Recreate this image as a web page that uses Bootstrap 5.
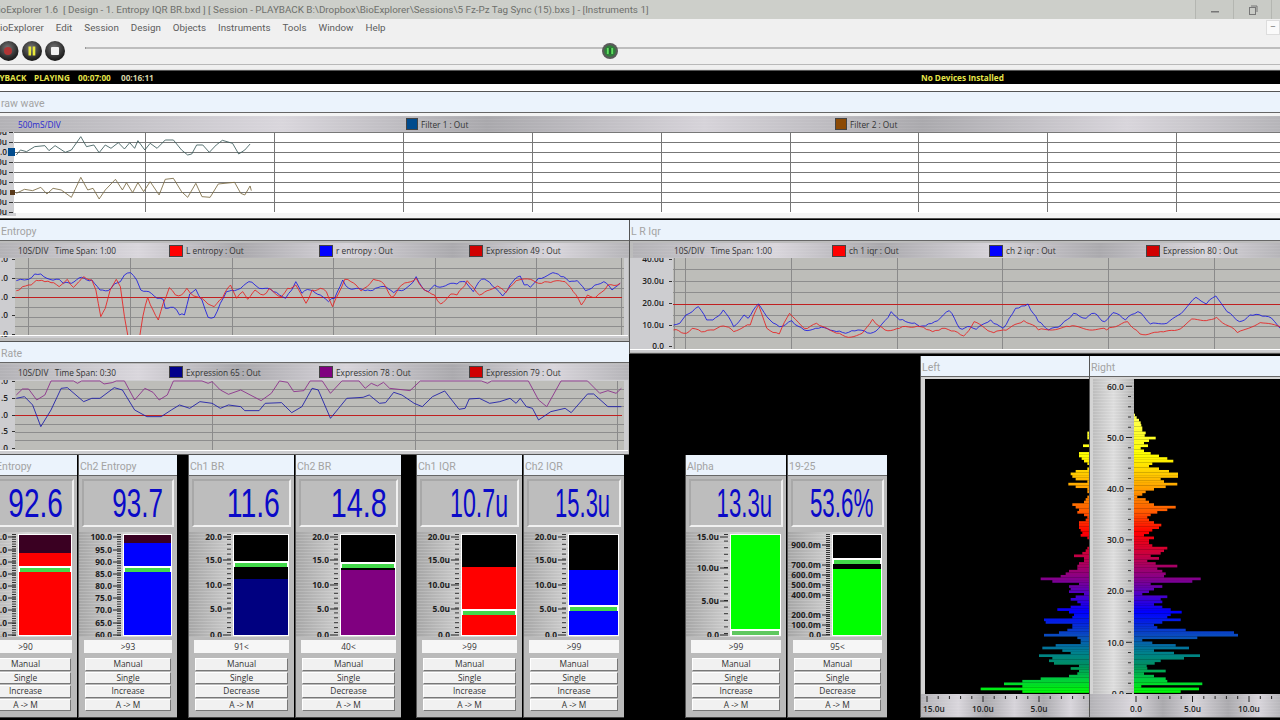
<!DOCTYPE html>
<html lang="en">
<head>
<meta charset="utf-8">
<title>BioExplorer 1.6</title>
<link href="https://cdn.jsdelivr.net/npm/bootstrap@5.3.0/dist/css/bootstrap.min.css" rel="stylesheet">
<style>
  :root {
    --ui-font: "Open Sans", "Noto Sans", "Liberation Sans", sans-serif;
    --win-font: Roboto, "Liberation Sans", sans-serif;
    --head-metal: repeating-linear-gradient(0deg, rgba(255,255,255,.07) 0 1px, transparent 1px 3px), linear-gradient(90deg, #b3b2b6, #d9d6dc 22%, #a9a8ac 38%, #d6d3d9 55%, #aaa9ad 72%, #d8d5db 88%, #b5b4b8);
    --side-metal: repeating-linear-gradient(0deg, rgba(255,255,255,.16) 0 1px, transparent 1px 3px), linear-gradient(90deg, #a6a6a6, #d6d6d6 55%, #bdbdbd);
  }
  html, body { height: 100%; }
  body { width: 1280px; height: 720px; overflow: hidden; background: #000; font-family: var(--ui-font); }

  .app-title { height: 19px; background: #cdcfca; color: #6d6f6c; font-family: var(--win-font); font-size: 9.85px; line-height: 19px; white-space: nowrap; flex: none; }
  .app-title .ttl { margin-left: -8px; }
  .win-box { margin-right: -29px; }
  .win-ctl { width: 38px; height: 19px; border-left: 1px solid #b4b6b1; color: #666; background: #c9cbc6; }
  .app-menu { height: 18px; background: #f0f0f0; padding: 0; font-family: var(--win-font); font-size: 9.8px; flex: none; }
  .app-menu .navbar-nav .nav-link { padding: 0 6px; line-height: 18px; color: #5c5c5c; }
  .app-menu .navbar-nav .nav-link.first { margin-left: -12px; }
  .mini-ctl { width: 14px; height: 15px; margin-top: -1px; background: #fafafa; border: 1px solid #ddd; color: #777; font-size: 9px; line-height: 12px; text-align: center; }
  .app-tools { height: 33px; background: #f0f0f0; flex: none; }
  .round-btns { width: 85px; flex: none; }
  .slider-line { height: 2px; margin-top: -5px; background: #bdbdbd; border-left: 1px solid #999; }
  .tool-foot { height: 6px; border-top: 1px solid #b9b9b9; border-bottom: 1px solid #ddd; }
  .thumb { position: absolute; left: 602px; top: 6px; }
  .app-status { height: 14px; border-top: 1px solid #555; background: #000; color: #e6e64a; font-size: 8.2px; font-weight: 700; line-height: 14px; white-space: nowrap; flex: none; }
  .app-status .st-a { margin-left: -16px; width: 50px; flex: none; }
  .app-status .st-b { width: 44px; flex: none; }
  .app-status .st-c { width: 43px; flex: none; }
  .app-status .st-d { width: 800px; color: #d6d6a8; flex: none; }
  .app-gap { height: 8px; background: #fff; border-bottom: 1px solid #555; flex: none; }

  .mdi { position: relative; height: 628px; background: #000; flex: none; }
  .iw { position: absolute; background: #bcbcbc; border-left: 1px solid #555; border-bottom: 1px solid #555; overflow: hidden; }
  .iw-title { height: 21px; background: #ebf3fc; border-bottom: 1px solid #666; color: #a3a3a3; font-family: var(--win-font); font-size: 10.5px; line-height: 23px; padding-left: 1px; white-space: nowrap; flex: none; }
  .w-raw { left: -1px; top: 0; width: 1282px; height: 127px; background: #f4f4f4; }
  .w-ent { left: -1px; top: 128px; width: 630px; height: 122px; }
  .w-iqr { left: 629px; top: 128px; width: 652px; height: 134px; }
  .w-rate { left: -1px; top: 250px; width: 630px; height: 113px; }
  .w-hl { left: 920px; top: 264px; width: 170px; height: 362px; }
  .w-hr { left: 1089px; top: 264px; width: 192px; height: 362px; }

  .cw-head { height: 15px; margin-top: 2px; background: var(--head-metal); color: #333; font-size: 8.3px; line-height: 15px; white-space: nowrap; flex: none; }
  .cw-head .t0 { flex: none; }
  .cw-head .sw { width: 14px; height: 12px; margin-right: 3px; border: 1px solid #444; flex: none; }
  .cw-head .lg { display: flex; align-items: center; flex: none; }
  .hd-raw { height: 16px; margin-top: 3px; padding-left: 18px; } .hd-raw .t0 { width: 388px; color: #2a2ad0; } .hd-raw .lg { width: 429px; }
  .hd-raw .sw { width: 12px; }
  .hd-ent { padding-left: 18px; } .hd-ent .t0 { width: 151px; } .hd-ent .lg { width: 150px; }
  .hd-rate { height: 16px; margin-top: 1px; }
  .hd-iqr { padding-left: 41px; margin-left: 3px; } .hd-iqr .t0 { width: 158px; } .hd-iqr .lg { width: 157px; }
  .cw-body { display: block; flex: none; }
  .cw-body text, .h-axis text { font-family: var(--ui-font); font-size: 8.3px; font-weight: 600; fill: #222; }
  .tr { fill: none; stroke-width: 1; vector-effect: non-scaling-stroke; stroke-linejoin: round; stroke-opacity: .85; }

  .g-win { top: 363px; height: 263px; border-bottom-color: #444; background: #bababa; }
  .g-value { height: 48px; margin: 3px 3px 0 3px; padding-right: 9px; background: #bdbdbd; border: 2px solid #f0f0f0; border-top-color: #a8a8a8; border-left-color: #a8a8a8; color: #0a0ac8; font-family: "Liberation Sans", sans-serif; font-size: 40px; line-height: 44px; }
  .g-value span { flex: none; transform-origin: right center; }
  .g-mid { margin: 5px 5px 0 0; height: 105px; background: var(--side-metal); }
  .g-mid svg { flex: none; display: block; }
  .g-mid svg text { font-family: var(--ui-font); font-size: 8.4px; font-weight: 700; fill: #1d1d1d; }
  .g-bar { position: relative; height: 102px; margin-top: 2px; background: #000; border: 1px solid #fff; overflow: hidden; }
  .g-cap { position: absolute; left: 0; right: 0; height: 6px; border: 1px solid #fff; border-width: 2px 1px 0 1px; background: #42d94a; }
  .g-range { height: 13px; margin: 3px 5px 5px 5px; background: #f6f6f6; color: #333; font-size: 8.4px; line-height: 13px; text-align: center; }
  .g-btn.btn { display: block; width: calc(100% - 12px); height: 12.5px; margin: 0 6px 1px 6px; padding: 0; border: 1px solid; border-color: #fff #777 #777 #fff; border-radius: 0; background: #f1f1f1; color: #333; font-size: 8.4px; line-height: 10px; }

  .h-black { background: #000; flex: none; display: block; }
  .h-axis { display: block; flex: none; background: var(--head-metal); }
  .h-left { padding: 2px 0 0 4px; background: #d4d4d4; flex: none; }
  .h-right { padding-top: 2px; flex: none; background: #d4d4d4; }
  .h-side { width: 41px; margin-left: 3px; flex: none; background: repeating-linear-gradient(0deg, rgba(255,255,255,.16) 0 1px, transparent 1px 3px), linear-gradient(90deg, #bdbdbd, #dcdcdc 50%, #b5b5b5); }
</style>
</head>
<body class="d-flex flex-column">

<div class="app-title d-flex justify-content-between">
  <div class="ttl">BioExplorer 1.6 &nbsp;[ Design - 1. Entropy IQR BR.bxd ] [ Session - PLAYBACK B:\Dropbox\BioExplorer\Sessions\5 Fz-Pz Tag Sync (15).bxs ] - [Instruments 1]</div>
  <div class="d-flex win-box">
    <div class="win-ctl d-flex align-items-center justify-content-center"><svg width="10" height="10"><rect x="1" y="6" width="8" height="1.5" fill="#777"/></svg></div>
    <div class="win-ctl d-flex align-items-center justify-content-center"><svg width="10" height="10"><rect x="1.5" y="2.5" width="6" height="7" fill="none" stroke="#777"/><path d="M3 1h6v6" fill="none" stroke="#777"/></svg></div>
    <div class="win-ctl"></div>
  </div>
</div>

<nav class="navbar navbar-expand app-menu">
  <ul class="navbar-nav flex-row flex-grow-1">
    <li class="nav-item"><a class="nav-link first" href="#">BioExplorer</a></li>
    <li class="nav-item"><a class="nav-link" href="#">Edit</a></li>
    <li class="nav-item"><a class="nav-link" href="#">Session</a></li>
    <li class="nav-item"><a class="nav-link" href="#">Design</a></li>
    <li class="nav-item"><a class="nav-link" href="#">Objects</a></li>
    <li class="nav-item"><a class="nav-link" href="#">Instruments</a></li>
    <li class="nav-item"><a class="nav-link" href="#">Tools</a></li>
    <li class="nav-item"><a class="nav-link" href="#">Window</a></li>
    <li class="nav-item"><a class="nav-link" href="#">Help</a></li>
  </ul>
  <div class="mini-ctl">–</div>
</nav>

<div class="app-tools d-flex flex-column position-relative">
  <div class="d-flex align-items-center flex-grow-1">
    <div class="round-btns">
      <svg width="85" height="26" viewBox="0 0 85 26">
        <defs>
          <radialGradient id="rb" cx=".45" cy=".35" r=".7"><stop offset="0" stop-color="#777"/><stop offset=".7" stop-color="#2c2c2c"/><stop offset="1" stop-color="#111"/></radialGradient>
        </defs>
        <circle cx="8.5" cy="13" r="10" fill="url(#rb)"/><circle cx="8" cy="13" r="4" fill="#b03535"/>
        <circle cx="32" cy="13" r="10" fill="url(#rb)"/><rect x="28.5" y="8.5" width="2.6" height="9" fill="#e8e83a"/><rect x="32.7" y="8.5" width="2.6" height="9" fill="#e8e83a"/>
        <circle cx="55" cy="13" r="10" fill="url(#rb)"/><rect x="51" y="9" width="8" height="8" rx="1" fill="#f2f2f2"/>
      </svg>
    </div>
    <div class="slider-line flex-grow-1"></div>
  </div>
  <div class="tool-foot"></div>
  <svg class="thumb" width="16" height="16" viewBox="0 0 16 16">
    <circle cx="8" cy="8" r="8" fill="#5a5a5a"/><circle cx="8" cy="8" r="5.8" fill="#2f7d3a"/>
    <path d="M5.8 5v6M10.2 5v6" stroke="#5fe05f" stroke-width="1.8"/><path d="M8 5v6" stroke="#1d4d25"/>
  </svg>
</div>

<div class="app-status d-flex">
  <div class="st-a">PLAYBACK</div><div class="st-b">PLAYING</div><div class="st-c">00:07:00</div><div class="st-d">00:16:11</div><div>No Devices Installed</div>
</div>
<div class="app-gap"></div>

<div class="mdi">
  <!-- raw wave -->
  <section class="iw w-raw d-flex flex-column">
    <div class="iw-title">raw wave</div>
    <div class="cw-head hd-raw d-flex align-items-center">
      <div class="t0">500mS/DIV</div>
      <div class="lg"><span class="sw" style="background:#004b8d"></span>Filter 1 : Out</div>
      <div class="lg"><span class="sw" style="background:#8b4a06"></span>Filter 2 : Out</div>
    </div>
    <svg class="cw-body" width="1280" height="84" viewBox="0 132 1280 84">
      <rect x="0" y="132" width="16" height="84" fill="#cfcfd2"/>
      <rect x="14" y="132" width="1266" height="81" fill="#fff"/>
      <path d="M14 142.5H1280M14 152.5H1280M14 162.5H1280M14 172.5H1280M14 182.5H1280M14 192.5H1280M14 202.5H1280M14 132.5H1280" stroke="#777" fill="none"/>
      <path d="M145.5 133V212M274.5 133V212M403.5 133V212M532.5 133V212M661.5 133V212M790.5 133V212M918.5 133V212M1047.5 133V212M1176.5 133V212" stroke="#777" fill="none"/>
      <path d="M9 132.5h4M9 142.5h4M9 162.5h4M9 172.5h4M9 182.5h4M9 202.5h4M9 212.5h4" stroke="#333" fill="none"/>
      <text x="7" y="135" text-anchor="end">0u</text><text x="7" y="145" text-anchor="end">0u</text><text x="7" y="155" text-anchor="end">.0</text><text x="7" y="165" text-anchor="end">0u</text><text x="7" y="175" text-anchor="end">0u</text><text x="7" y="185" text-anchor="end">0u</text><text x="7" y="195" text-anchor="end">0u</text><text x="7" y="205" text-anchor="end">0u</text><text x="7" y="215" text-anchor="end">0u</text>
      <rect x="8" y="148" width="7" height="8" fill="#004b8d"/>
      <rect x="10" y="190" width="5" height="5" fill="#5a3a1a"/>
      <g transform="scale(.408 .3333)">
        <polyline class="tr" stroke="#3b5a5a" points="40,465 50,450 65,455 85,440 110,437 120,452 135,437 160,457 175,450 198,410 212,440 230,435 243,458 258,435 272,445 290,428 305,447 318,428 330,445 338,422 355,450 368,430 385,445 405,420 425,420 445,450 460,465 470,462 482,435 497,435 513,457 530,435 545,421 570,430 585,462 600,450 613,432"/>
        <polyline class="tr" stroke="#7a6a42" points="40,580 60,568 80,572 100,562 115,582 130,565 150,570 175,592 198,532 215,570 228,565 243,597 258,570 283,538 300,570 310,548 325,578 338,548 352,575 368,545 390,585 405,538 425,535 445,575 460,592 480,550 495,590 515,592 535,552 575,547 590,580 600,585 613,558 616,572"/>
      </g>
    </svg>
  </section>

  <!-- entropy -->
  <section class="iw w-ent d-flex flex-column">
    <div class="iw-title">Entropy</div>
    <div class="cw-head hd-ent d-flex align-items-center">
      <div class="t0">10S/DIV &nbsp; Time Span: 1:00</div>
      <div class="lg"><span class="sw" style="background:#ff0000"></span>L entropy : Out</div>
      <div class="lg"><span class="sw" style="background:#0000ff"></span>r entropy : Out</div>
      <div class="lg"><span class="sw" style="background:#d00000"></span>Expression 49 : Out</div>
    </div>
    <svg class="cw-body" width="628" height="80" viewBox="0 258 628 80">
      <rect x="0" y="258" width="628" height="80" fill="#cdcdd0"/>
      <rect x="15" y="258" width="609" height="77" fill="#bdbdb9"/>
      <path d="M15 268.5H624M15 278.5H624M15 288.5H624M15 307.5H624M15 317.5H624M15 326.5H624" stroke="#8d8d8d" fill="none"/>
      <path d="M28.5 258V335M130.5 258V335M232.5 258V335M333.5 258V335M435.5 258V335M536.5 258V335M621.5 258V335" stroke="#8a8a8a" fill="none"/>
      <path d="M15 297.5H622" stroke="#c02020" fill="none"/>
      <path d="M12 259.5h3M12 278.5h3M12 297.5h3M12 315.5h3M12 334.5h3" stroke="#333" fill="none"/>
      <text x="8" y="262" text-anchor="end">.0</text><text x="8" y="281" text-anchor="end">.0</text><text x="8" y="300" text-anchor="end">.0</text><text x="8" y="318" text-anchor="end">.0</text><text x="8" y="337" text-anchor="end">.0</text>
      <path d="M0 335.5H628" stroke="#fff" fill="none"/>
      <g transform="translate(0 220) scale(.408 .3333)">
        <polyline class="tr wig" stroke="#1a1ae0" points="40,182 50,178 60,180 70,178 85,162 100,162 115,175 145,178 155,190 175,190 200,172 225,180 245,210 265,212 280,192 295,185 305,165 320,158 335,180 345,210 365,215 385,235 400,238 405,265 425,262 440,285 452,285 465,222 480,208 495,240 510,292 525,292 540,250 555,215 575,212 590,205 610,185 625,195 635,205 650,205 670,215 685,225 700,235 715,210 725,185 740,220 760,210 785,225 805,245 820,235 840,180 855,205 880,205 895,212 920,205 945,200 965,218 990,210 1005,195 1020,170 1040,210 1050,215 1065,195 1085,200 1105,190 1120,192 1140,185 1160,215 1180,178 1200,187 1215,205 1232,228 1250,195 1275,168 1285,195 1300,202 1320,175 1355,158 1375,170 1395,185 1415,182 1435,212 1450,205 1480,185 1500,210 1520,190"/>
        <polyline class="tr wig" stroke="#e82020" points="40,212 55,200 70,195 95,182 125,188 145,200 165,178 180,202 205,170 225,180 235,210 247,290 258,265 270,210 285,178 295,200 305,290 313,345"/>
        <polyline class="tr wig" stroke="#e82020" points="343,345 350,290 362,232 375,270 388,300 400,250 415,203 430,225 445,225 458,205 475,228 495,235 525,260 545,235 565,195 580,235 595,215 607,238 625,210 645,225 660,205 690,230 705,205 725,195 750,250 765,210 785,205 800,215 815,260 830,220 845,178 860,185 885,213 915,178 935,185 960,232 985,195 1020,175 1040,210 1065,225 1080,252 1105,222 1120,225 1145,182 1175,225 1200,210 1220,198 1240,218 1265,182 1300,178 1320,190 1365,182 1385,185 1405,215 1425,255 1440,225 1460,232 1490,195 1520,190"/>
      </g>
    </svg>
  </section>

  <!-- rate -->
  <section class="iw w-rate d-flex flex-column">
    <div class="iw-title">Rate</div>
    <div class="cw-head hd-ent hd-rate d-flex align-items-center">
      <div class="t0">10S/DIV &nbsp; Time Span: 0:30</div>
      <div class="lg"><span class="sw" style="background:#00008b"></span>Expression 65 : Out</div>
      <div class="lg"><span class="sw" style="background:#800080"></span>Expression 78 : Out</div>
      <div class="lg"><span class="sw" style="background:#d00000"></span>Expression 79 : Out</div>
    </div>
    <svg class="cw-body" width="628" height="74" viewBox="0 380 628 74">
      <rect x="0" y="380" width="628" height="74" fill="#cdcdd0"/>
      <rect x="15" y="381" width="609" height="69" fill="#bdbdb9"/>
      <path d="M15 389.5H624M15 398.5H624M15 406.5H624M15 424.5H624M15 432.5H624M15 440.5H624" stroke="#8d8d8d" fill="none"/>
      <path d="M212.5 381V450M415.5 381V450M617.5 381V450" stroke="#8a8a8a" fill="none"/>
      <path d="M15 415.5H622" stroke="#c02020" fill="none"/>
      <path d="M12 381.5h3M12 398.5h3M12 415.5h3M12 431.5h3M12 448.5h3" stroke="#333" fill="none"/>
      <text x="8" y="384" text-anchor="end">.0</text><text x="8" y="401" text-anchor="end">.5</text><text x="8" y="418" text-anchor="end">.0</text><text x="8" y="434" text-anchor="end">.5</text><text x="8" y="451" text-anchor="end">.0</text>
      <path d="M0 450.5H628" stroke="#fff" fill="none"/>
      <g transform="translate(0 220) scale(.408 .3333)">
        <polyline class="tr" stroke="#8a2a8a" points="40,525 55,507 70,507 90,540 110,525 125,483 180,483 190,490 200,483 245,483 255,492 275,488 285,483 305,483 330,540 355,505 375,517 390,540 410,525 425,483 495,483 510,490 520,485 540,510 560,523 590,510 640,542 665,520 685,483 705,487 720,515 745,512 760,483 790,483 810,520 838,483 880,483 895,505 910,490 925,498 940,487 955,505 1005,512 1030,483 1180,483 1195,490 1205,483 1295,483 1320,540 1340,560 1375,483 1440,483 1470,520 1490,512 1510,520 1523,505"/>
        <polyline class="tr" stroke="#1a1aa8" points="40,535 60,530 80,555 100,620 125,570 150,505 165,503 205,545 225,535 245,535 280,503 300,510 330,570 360,590 395,590 420,570 440,555 465,565 490,545 520,550 540,565 560,555 590,560 600,572 635,572 650,550 690,548 715,578 740,560 765,505 780,510 810,595 830,565 850,535 890,532 905,525 930,550 945,548 965,517 985,525 1015,550 1035,560 1060,530 1090,513 1125,568 1140,565 1150,537 1175,535 1200,550 1225,545 1250,535 1265,550 1275,535 1290,560 1305,565 1320,600 1350,575 1385,565 1400,578 1440,522 1455,522 1490,560 1523,560"/>
      </g>
    </svg>
  </section>

  <!-- L R iqr -->
  <section class="iw w-iqr d-flex flex-column">
    <div class="iw-title">L R Iqr</div>
    <div class="cw-head hd-iqr d-flex align-items-center">
      <div class="t0">10S/DIV &nbsp; Time Span: 1:00</div>
      <div class="lg"><span class="sw" style="background:#ff0000"></span>ch 1 iqr : Out</div>
      <div class="lg"><span class="sw" style="background:#0000ff"></span>ch 2 iqr : Out</div>
      <div class="lg"><span class="sw" style="background:#d00000"></span>Expression 80 : Out</div>
    </div>
    <svg class="cw-body" width="650" height="94" viewBox="630 258 650 94">
      <rect x="630" y="258" width="650" height="94" fill="#cdcdd0"/>
      <rect x="673" y="258" width="607" height="91" fill="#bdbdb9"/>
      <path d="M673 269.5H1280M673 281.5H1280M673 292.5H1280M673 315.5H1280M673 326.5H1280M673 337.5H1280" stroke="#8d8d8d" fill="none"/>
      <path d="M674.5 258V349M685.5 258V349M791.5 258V349M897.5 258V349M1002.5 258V349M1108.5 258V349M1214.5 258V349" stroke="#8a8a8a" fill="none"/>
      <path d="M673 304.5H1280" stroke="#c02020" fill="none"/>
      <path d="M669 259.5h3M669 281.5h3M669 303.5h3M669 325.5h3M669 346.5h3" stroke="#333" fill="none"/>
      <text x="664" y="262" text-anchor="end">40.0u</text><text x="664" y="284" text-anchor="end">30.0u</text><text x="664" y="306" text-anchor="end">20.0u</text><text x="664" y="328" text-anchor="end">10.0u</text><text x="664" y="349" text-anchor="end">0.0</text>
      <path d="M630 349.5H1280" stroke="#fff" fill="none"/>
      <g transform="translate(630 0) scale(.4146 .3333)">
        <polyline class="tr wig" stroke="#1a1ae0" points="105,975 120,970 135,945 165,920 185,960 200,960 225,930 250,980 275,945 285,955 310,912 330,950 360,980 390,962 420,990 455,985 490,992 520,1000 550,990 580,1000 600,985 630,935 650,960 680,970 705,978 735,965 770,932 795,985 820,980 835,988 870,960 900,985 930,925 960,912 985,965 1010,990 1040,975 1070,940 1100,955 1120,940 1145,965 1165,938 1195,960 1225,935 1255,972 1295,970 1330,940 1365,892 1390,912 1413,888 1440,935 1470,965 1495,945 1540,950 1568,985"/>
        <polyline class="tr wig" stroke="#e82020" points="105,990 130,1000 150,985 180,995 225,978 250,995 290,975 310,915 330,985 360,1002 385,940 420,985 450,970 490,995 520,1010 560,1000 585,958 615,990 650,985 700,980 730,995 760,985 805,1008 830,965 870,995 900,990 950,962 985,990 1060,980 1150,990 1200,965 1230,1002 1280,995 1320,990 1355,957 1390,962 1415,952 1465,998 1520,968 1568,980"/>
      </g>
    </svg>
  </section>

  <!-- spectrum left / right -->
  <section class="iw w-hl d-flex flex-column">
    <div class="iw-title">Left</div>
    <div class="h-left d-flex"><svg id="histL" class="h-black" width="165" height="315" viewBox="925 379 165 315"></svg></div>
    <svg id="axisL" class="h-axis" width="170" height="24" viewBox="920 695 170 24"></svg>
  </section>
  <section class="iw w-hr d-flex flex-column">
    <div class="iw-title">Right</div>
    <div class="h-right d-flex">
      <div class="h-side"><svg id="sideR" width="41" height="315" viewBox="1093 379 41 315"></svg></div>
      <svg id="histR" class="h-black" width="148" height="315" viewBox="1134 379 148 315"></svg>
    </div>
    <svg id="axisR" class="h-axis" width="192" height="24" viewBox="1089 695 192 24"></svg>
  </section>

  <div id="gauges"></div>
</div>

<script src="https://cdn.jsdelivr.net/npm/bootstrap@5.3.0/dist/js/bootstrap.bundle.min.js"></script>
<script>
  // y positions are read from the scale, in px down from the top of the bar
  var tens = [['20.0', 3], ['15.0', 26], ['10.0', 51], ['5.0', 75], ['0.0', 101]];
  var tensU = [['20.0u', 3], ['15.0u', 26], ['10.0u', 51], ['5.0u', 75], ['0.0', 101]];
  var pct = [['100.0', 3], ['95.0', 16], ['90.0', 28], ['85.0', 40], ['80.0', 52], ['75.0', 64], ['70.0', 76], ['65.0', 89], ['60.0', 101]];

  var gauges = [
    {t: 'Ch1 Entropy', v: '92.6', sx: .7, x: -27, w: 104, sc: pct, minor: 2.4, over: '#3a0022', cut: 18, fill: '#ff0000', cap: 31, r: '>90', d: 'Increase'},
    {t: 'Ch2 Entropy', v: '93.7', sx: .65, x: 78, w: 99, sc: pct, minor: 2.4, over: '#3a0022', cut: 8, fill: '#0000ff', cap: 31, r: '>93', d: 'Increase'},
    {t: 'Ch1 BR', v: '11.6', sx: .71, x: 188, w: 106, sc: tens, minor: 4.9, over: '#000', cut: 44, fill: '#000080', cap: 26, r: '91<', d: 'Decrease'},
    {t: 'Ch2 BR', v: '14.8', sx: .72, x: 295, w: 106, sc: tens, minor: 4.9, over: '#000', cut: 35, fill: '#800080', cap: 27, r: '40<', d: 'Decrease'},
    {t: 'Ch1 IQR', v: '10.7u', sx: .58, x: 416, w: 106, sc: tensU, minor: 4.9, over: '#000', cut: 32, fill: '#ff0000', cap: 74, r: '>99', d: 'Increase'},
    {t: 'Ch2 IQR', v: '15.3u', sx: .55, x: 523, w: 101, sc: tensU, minor: 4.9, over: '#000', cut: 35, fill: '#0000ff', cap: 70, r: '>99', d: 'Increase'},
    {t: 'Alpha', v: '13.3u', sx: .555, x: 685, w: 101, sc: [['15.0u', 3], ['10.0u', 34], ['5.0u', 67], ['0.0', 101]], minor: 6.6, over: '#000', cut: 0, fill: '#00ff00', cap: 94, r: '>99', d: 'Increase'},
    {t: '19-25', v: '53.6%', sx: .56, x: 787, w: 100, sc: [['900.0m', 11], ['700.0m', 31], ['600.0m', 41], ['500.0m', 51], ['400.0m', 61], ['200.0m', 81], ['100.0m', 91], ['0.0', 101]], minor: 2, over: '#000', cut: 33, fill: '#00ff00', cap: 23, r: '95<', d: 'Decrease', gap: 5}
  ];

  function scaleSvg(g) {
    var s = '<svg width="44" height="105" viewBox="0 0 44 105">';
    for (var y = 0; y <= 101; y += g.minor) {
      s += '<path d="M38 ' + (y + 2.5) + 'h4" stroke="#333"/>';
    }
    g.sc.forEach(function (m) {
      s += '<path d="M34 ' + (m[1] + 2) + 'h8" stroke="#222"/>';
      s += '<text x="33" y="' + (m[1] + 5) + '" text-anchor="end">' + m[0] + '</text>';
    });
    return s + '</svg>';
  }

  function gaugeHtml(g) {
    var dim = g.t === 'Alpha';
    return '<section class="iw g-win d-flex flex-column" style="left:' + g.x + 'px;width:' + g.w + 'px">' +
      '<div class="iw-title">' + g.t + '</div>' +
      '<div class="g-value d-flex justify-content-end"><span style="transform:scaleX(' + g.sx + ')">' + g.v + '</span></div>' +
      '<div class="g-mid d-flex">' + scaleSvg(g) +
        '<div class="g-bar flex-grow-1 d-flex flex-column">' +
          '<div style="height:' + g.cut + 'px;background:' + g.over + '"></div>' +
          '<div class="flex-grow-1" style="background:' + g.fill + '"></div>' +
          (g.gap ? '<div class="g-cap" style="top:' + (g.cap + 5) + 'px;height:' + (g.gap + 1) + 'px;border:0;background:#000"></div>' : '') +
          '<div class="g-cap" style="top:' + g.cap + 'px;' + (dim ? 'background:#60c860;border-bottom:0;height:8px' : '') + '"></div>' +
        '</div></div>' +
      '<div class="g-range">' + g.r.replace('<', '&lt;') + '</div>' +
      ['Manual', 'Single', g.d, 'A -&gt; M'].map(function (b) {
        return '<button type="button" class="btn g-btn">' + b + '</button>';
      }).join('') +
      '</section>';
  }
  document.getElementById('gauges').innerHTML = gauges.map(gaugeHtml).join('');

  // the signal traces are noisier than the points read off the picture
  document.querySelectorAll('.wig').forEach(function (line) {
    var pts = line.getAttribute('points').split(' ').map(function (p) { return p.split(',').map(Number); });
    var out = [];
    pts.forEach(function (p, i) {
      if (i === 0) { out.push(p.join(',')); return; }
      var q = pts[i - 1], n = Math.max(1, Math.round((p[0] - q[0]) / 7));
      for (var k = 1; k <= n; k++) {
        var x = q[0] + (p[0] - q[0]) * k / n, y = q[1] + (p[1] - q[1]) * k / n;
        if (k < n) y += 5 * Math.sin(x * 1.37) * Math.cos(x * .53);
        out.push(x.toFixed(1) + ',' + y.toFixed(1));
      }
    });
    line.setAttribute('points', out.join(' '));
  });

  // spectrum bands, widths read off the picture at 3x, top band first
  var bandR = [3,8,15,20,22,25,25,35,32,65,45,30,42,20,30,50,75,100,118,55,45,75,105,132,132,80,90,130,95,60,35,25,10,35,45,60,125,100,70,50,40,45,60,82,75,55,45,30,60,45,45,55,100,90,80,50,75,40,65,130,70,85,95,90,200,175,50,85,60,45,25,100,80,85,60,85,110,143,110,100,140,85,60,70,155,300,312,190,25,55,125,165,60,120,198,150,80,62,38,40,95,30,60,95,100,205,22,195,140];
  var bandL = [0,0,0,0,0,0,0,5,5,5,0,0,18,0,0,30,30,22,15,5,0,5,40,55,50,40,5,62,40,5,5,0,5,10,15,50,40,30,35,15,5,10,30,30,30,25,20,25,5,0,0,0,5,10,20,45,15,15,30,35,35,60,70,85,145,110,30,60,55,60,15,40,55,35,25,55,95,60,45,50,135,130,50,50,65,90,135,35,25,25,100,140,80,55,150,110,120,105,30,55,30,35,60,145,200,255,200,325,200];
  var stops = [[0,'#ffff55'],[.144,'#ffff00'],[.215,'#ffc800'],[.28,'#ff9000'],[.347,'#ff5a00'],[.42,'#ff0000'],[.5,'#c80040'],[.593,'#800090'],[.647,'#4a00c8'],[.707,'#0000ff'],[.79,'#0a4ac0'],[.85,'#008090'],[.9,'#009060'],[.946,'#00c840'],[1,'#00ff00']];

  function histSvg(id, vals, startX, dir) {
    var grad = '<defs><linearGradient id="' + id + 'G" gradientUnits="userSpaceOnUse" x1="0" y1="415" x2="0" y2="693.5">' +
      stops.map(function (s) { return '<stop offset="' + s[0] + '" stop-color="' + s[1] + '"/>'; }).join('') +
      '</linearGradient></defs>';
    var rects = vals.map(function (v, i) {
      if (!v) return '';
      var w = v / 3;
      var y = 355 + (176 + 7.68 * i) / 3;
      var x = dir > 0 ? startX : startX - w;
      return '<rect x="' + x + '" y="' + y.toFixed(2) + '" width="' + w.toFixed(1) + '" height="2.7"/>';
    }).join('');
    document.getElementById(id).innerHTML = grad + '<g fill="url(#' + id + 'G)">' + rects + '</g>';
  }
  histSvg('histL', bandL, 1089, -1);
  histSvg('histR', bandR, 1134, 1);

  function sideScale() {
    var s = '', y, lab = 60;
    for (var i = 0; i <= 30; i++) {
      y = 386.3 + i * 10.24;
      if (i % 5 === 0) {
        s += '<path d="M1126 ' + y + 'h6" stroke="#222"/><text x="1124" y="' + (y + 3.3) + '" text-anchor="end" font-size="8.6" fill="#222" font-family="Open Sans, sans-serif" font-weight="600">' + (lab === 0 ? '0.0' : lab.toFixed(1)) + '</text>';
        lab -= 10;
      } else {
        s += '<path d="M1128 ' + y + 'h3" stroke="#333"/>';
      }
    }
    document.getElementById('sideR').innerHTML = s;
  }
  sideScale();

  function axis(id, zero, step, dir, y0, count) {
    var s = '';
    for (var i = 0; i < count; i++) {
      var x = zero + dir * i * step;
      var major = i % 5 === 0;
      s += '<path d="M' + x.toFixed(1) + ' ' + y0 + 'v' + (major ? 6 : 3) + '" stroke="#222"/>';
      if (major) {
        // the outermost label is kept inside the window
        var tx = (i === 15) ? x + 7 : x;
        s += '<text x="' + tx.toFixed(1) + '" y="' + (y0 + 16) + '" text-anchor="middle">' + (i === 0 ? '0.0' : i.toFixed(1) + 'u') + '</text>';
      }
    }
    document.getElementById(id).innerHTML = s;
  }
  axis('axisL', 1094, 11.2, -1, 697, 16);
  axis('axisR', 1135, 11.3, 1, 697, 13);
</script>
</body>
</html>
